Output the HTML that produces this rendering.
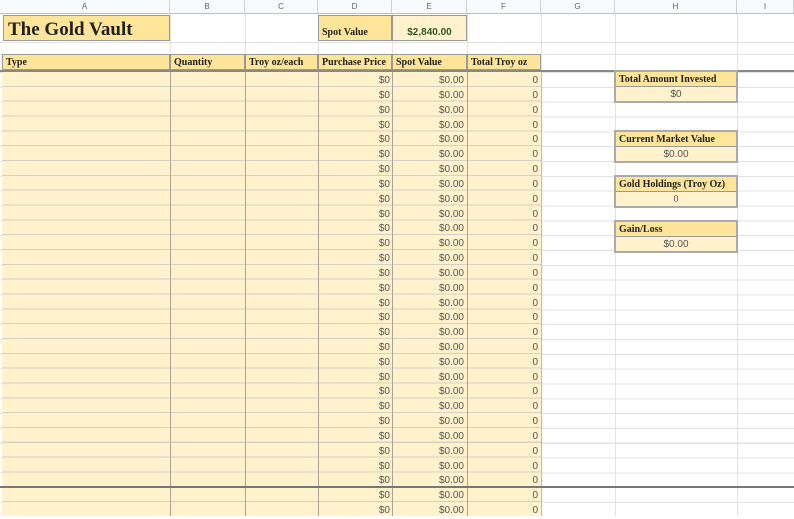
<!DOCTYPE html><html><head><style>
*{margin:0;padding:0;box-sizing:border-box}
body{width:794px;height:516px;overflow:hidden;background:#fff;font-family:"Liberation Sans",sans-serif;position:relative}
.a{position:absolute}
.ch{top:0;height:14px;background:#f8f9fa;border-bottom:1px solid #c0c0c0;border-right:1px solid #d0d0d0;font-size:8px;color:#666;text-align:center;line-height:14px}
.grid{position:absolute;left:0;top:72px;width:794px;height:444px;background-image:repeating-linear-gradient(to bottom,#e2e2e2 0 1px,transparent 1px 14.83px)}
.vl{position:absolute;top:14px;bottom:0;width:1px;background:#e2e2e2}
.data{position:absolute;left:2px;top:71px;width:539px;height:445px;background:#fff2cc;background-image:repeating-linear-gradient(to bottom,#d6d0c0 0 1px,transparent 1px 14.83px)}
.dv{position:absolute;top:71px;bottom:0;width:1px;background:#a9a497}
.hd{position:absolute;background:#ffe599;border:1px solid #999;font-family:"Liberation Serif",serif;font-weight:bold;font-size:10px;color:#222;padding-left:3px}
.r{position:absolute;left:0;width:541px;height:15px;font-size:10px;color:#555;line-height:17px}
.r i{position:absolute;font-style:normal;text-align:right}
.d{left:318px;width:72px}.e{left:392px;width:72px}.f{left:467px;width:71px}
.bx{position:absolute;left:614px;width:124px;border:2px solid #aaa;background:#fff2cc}
.bx .t{background:#ffe599;border-bottom:1px solid #999;font-family:"Liberation Serif",serif;font-weight:bold;font-size:10px;height:15px;line-height:15px;padding-left:3px;color:#222}
.bx .v{height:14px;line-height:15px;text-align:center;font-size:10px;color:#555}
</style></head><body>
<div class="a ch" style="left:0;width:170px">A</div>
<div class="a ch" style="left:170px;width:75px">B</div>
<div class="a ch" style="left:245px;width:73px">C</div>
<div class="a ch" style="left:318px;width:74px">D</div>
<div class="a ch" style="left:392px;width:75px">E</div>
<div class="a ch" style="left:467px;width:74px">F</div>
<div class="a ch" style="left:541px;width:74px">G</div>
<div class="a ch" style="left:615px;width:122px">H</div>
<div class="a ch" style="left:737px;width:57px">I</div>
<div class="a" style="left:0;top:42px;width:794px;height:1px;background:#e2e2e2"></div>
<div class="a" style="left:0;top:54px;width:794px;height:1px;background:#e2e2e2"></div>
<div class="grid"></div>
<div class="vl" style="left:170px"></div><div class="vl" style="left:245px"></div><div class="vl" style="left:318px"></div><div class="vl" style="left:392px"></div><div class="vl" style="left:467px"></div><div class="vl" style="left:541px"></div><div class="vl" style="left:615px"></div><div class="vl" style="left:737px"></div>
<div class="data"></div>
<div class="dv" style="left:170px"></div><div class="dv" style="left:245px"></div><div class="dv" style="left:318px"></div><div class="dv" style="left:392px"></div><div class="dv" style="left:467px"></div><div class="dv" style="left:541px;background:#bbb"></div>
<div class="a" style="left:0;top:70px;width:794px;height:2px;background:#888"></div>
<div class="a" style="left:0;top:486px;width:794px;height:2px;background:#777"></div>
<div class="hd" style="left:3px;top:15px;width:167px;height:26px;font-size:19px;line-height:27px;padding-left:4px">The Gold Vault</div>
<div class="hd" style="left:318px;top:15px;width:74px;height:26px;line-height:33px;font-size:10px">Spot Value</div>
<div class="a" style="left:392px;top:15px;width:75px;height:26px;background:#fff2cc;border:1px solid #999;color:#2d5a1b;font-weight:bold;font-size:10px;text-align:center;line-height:33px">$2,840.00</div>
<div class="hd" style="left:2px;top:54px;width:168px;height:16px;line-height:15px">Type</div>
<div class="hd" style="left:170px;top:54px;width:75px;height:16px;line-height:15px">Quantity</div>
<div class="hd" style="left:245px;top:54px;width:73px;height:16px;line-height:15px">Troy oz/each</div>
<div class="hd" style="left:318px;top:54px;width:74px;height:16px;line-height:15px">Purchase Price</div>
<div class="hd" style="left:392px;top:54px;width:75px;height:16px;line-height:15px">Spot Value</div>
<div class="hd" style="left:467px;top:54px;width:74px;height:16px;line-height:15px">Total Troy oz</div>
<div class="r" style="top:72px"><i class="d">$0</i><i class="e">$0.00</i><i class="f">0</i></div>
<div class="r" style="top:86.8px"><i class="d">$0</i><i class="e">$0.00</i><i class="f">0</i></div>
<div class="r" style="top:101.7px"><i class="d">$0</i><i class="e">$0.00</i><i class="f">0</i></div>
<div class="r" style="top:116.5px"><i class="d">$0</i><i class="e">$0.00</i><i class="f">0</i></div>
<div class="r" style="top:131.3px"><i class="d">$0</i><i class="e">$0.00</i><i class="f">0</i></div>
<div class="r" style="top:146.2px"><i class="d">$0</i><i class="e">$0.00</i><i class="f">0</i></div>
<div class="r" style="top:161px"><i class="d">$0</i><i class="e">$0.00</i><i class="f">0</i></div>
<div class="r" style="top:175.8px"><i class="d">$0</i><i class="e">$0.00</i><i class="f">0</i></div>
<div class="r" style="top:190.6px"><i class="d">$0</i><i class="e">$0.00</i><i class="f">0</i></div>
<div class="r" style="top:205.5px"><i class="d">$0</i><i class="e">$0.00</i><i class="f">0</i></div>
<div class="r" style="top:220.3px"><i class="d">$0</i><i class="e">$0.00</i><i class="f">0</i></div>
<div class="r" style="top:235.1px"><i class="d">$0</i><i class="e">$0.00</i><i class="f">0</i></div>
<div class="r" style="top:250px"><i class="d">$0</i><i class="e">$0.00</i><i class="f">0</i></div>
<div class="r" style="top:264.8px"><i class="d">$0</i><i class="e">$0.00</i><i class="f">0</i></div>
<div class="r" style="top:279.6px"><i class="d">$0</i><i class="e">$0.00</i><i class="f">0</i></div>
<div class="r" style="top:294.5px"><i class="d">$0</i><i class="e">$0.00</i><i class="f">0</i></div>
<div class="r" style="top:309.3px"><i class="d">$0</i><i class="e">$0.00</i><i class="f">0</i></div>
<div class="r" style="top:324.1px"><i class="d">$0</i><i class="e">$0.00</i><i class="f">0</i></div>
<div class="r" style="top:339px"><i class="d">$0</i><i class="e">$0.00</i><i class="f">0</i></div>
<div class="r" style="top:353.8px"><i class="d">$0</i><i class="e">$0.00</i><i class="f">0</i></div>
<div class="r" style="top:368.6px"><i class="d">$0</i><i class="e">$0.00</i><i class="f">0</i></div>
<div class="r" style="top:383.4px"><i class="d">$0</i><i class="e">$0.00</i><i class="f">0</i></div>
<div class="r" style="top:398.3px"><i class="d">$0</i><i class="e">$0.00</i><i class="f">0</i></div>
<div class="r" style="top:413.1px"><i class="d">$0</i><i class="e">$0.00</i><i class="f">0</i></div>
<div class="r" style="top:427.9px"><i class="d">$0</i><i class="e">$0.00</i><i class="f">0</i></div>
<div class="r" style="top:442.8px"><i class="d">$0</i><i class="e">$0.00</i><i class="f">0</i></div>
<div class="r" style="top:457.6px"><i class="d">$0</i><i class="e">$0.00</i><i class="f">0</i></div>
<div class="r" style="top:472.4px"><i class="d">$0</i><i class="e">$0.00</i><i class="f">0</i></div>
<div class="r" style="top:487.2px"><i class="d">$0</i><i class="e">$0.00</i><i class="f">0</i></div>
<div class="r" style="top:502.1px"><i class="d">$0</i><i class="e">$0.00</i><i class="f">0</i></div>
<div class="bx" style="top:70px"><div class="t">Total Amount Invested</div><div class="v">$0</div></div>
<div class="bx" style="top:130px"><div class="t">Current Market Value</div><div class="v">$0.00</div></div>
<div class="bx" style="top:175px"><div class="t">Gold Holdings (Troy Oz)</div><div class="v" style="font-family:'Liberation Serif',serif">0</div></div>
<div class="bx" style="top:220px"><div class="t">Gain/Loss</div><div class="v">$0.00</div></div>
</body></html>
